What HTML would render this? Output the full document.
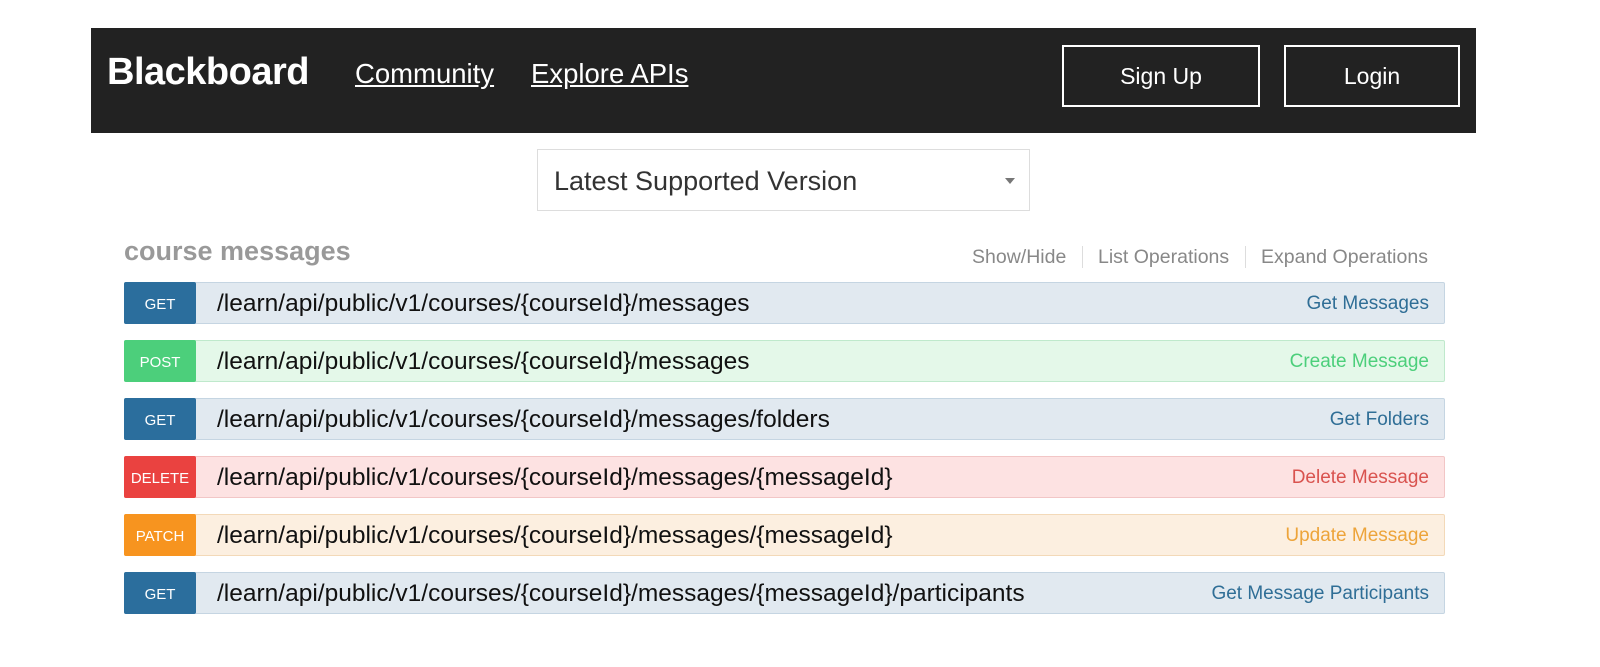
<!DOCTYPE html>
<html><head><meta charset="utf-8"><style>
body{margin:0;width:1600px;height:667px;background:#fff;font-family:"Liberation Sans",sans-serif;position:relative;overflow:hidden}
.hdr{position:absolute;left:91px;top:28px;width:1385px;height:105px;background:#222}
.logo{position:absolute;left:16px;top:23px;color:#fff;font-size:38px;font-weight:bold;letter-spacing:-0.5px}
.nav{position:absolute;top:30px;color:#fff;font-size:27.5px;text-decoration:underline}
.btn{position:absolute;top:17px;height:58px;border:2px solid #fff;color:#fff;font-size:23px;text-align:center;line-height:58px;box-sizing:content-box}
.sel{position:absolute;left:537px;top:149px;border:1px solid #ddd;font-size:27px;color:#333;line-height:62px;box-sizing:border-box;width:493px;height:62px;padding-left:16px}
.sel:after{content:"";position:absolute;right:14px;top:28px;border:5px solid transparent;border-top:6px solid #777}
h2{position:absolute;left:124px;top:236px;margin:0;font-size:27px;color:#999;font-weight:bold}
.ops{position:absolute;top:246px;font-size:19.5px;color:#888}
.sep{position:absolute;top:246px;width:1px;height:22px;background:#ddd}
.row{position:absolute;left:124px;width:1321px;height:42px;box-sizing:border-box;border:1px solid;border-radius:2px}
.b{position:absolute;left:-1px;top:-1px;width:72px;height:42px;border-radius:2px;color:#fff;font-size:15px;text-align:center;line-height:46px}
.p{position:absolute;left:92px;top:7px;font-size:24.5px;color:#111}
.r{position:absolute;right:15px;top:10px;font-size:19px}
.g{background:#e1e9f0;border-color:#c5d5e2}.g .b{background:#2b6e9d}.g .r{color:#2f6e96}
.po{background:#e4f8e9;border-color:#bfe9cc}.po .b{background:#4ccf7b}.po .r{color:#4ccf7b}
.d{background:#fde2e2;border-color:#f2c6c6}.d .b{background:#ea4240}.d .r{color:#d9534f}
.pa{background:#fcefe0;border-color:#f3d9b8}.pa .b{background:#f7941f}.pa .r{color:#eda43a}
</style></head><body>
<div class="hdr">
<div class="logo">Blackboard</div>
<div class="nav" style="left:264px">Community</div>
<div class="nav" style="left:440px">Explore APIs</div>
<div class="btn" style="left:971px;width:194px">Sign Up</div>
<div class="btn" style="left:1193px;width:172px">Login</div>
</div>
<div class="sel">Latest Supported Version</div>
<h2>course messages</h2>
<div class="ops" style="left:972px">Show/Hide</div>
<div class="sep" style="left:1082px"></div>
<div class="ops" style="left:1098px">List Operations</div>
<div class="sep" style="left:1245px"></div>
<div class="ops" style="left:1261px">Expand Operations</div>

<div class="row g" style="top:282px"><div class="b">GET</div><div class="p">/learn/api/public/v1/courses/{courseId}/messages</div><div class="r">Get Messages</div></div>
<div class="row po" style="top:340px"><div class="b">POST</div><div class="p">/learn/api/public/v1/courses/{courseId}/messages</div><div class="r">Create Message</div></div>
<div class="row g" style="top:398px"><div class="b">GET</div><div class="p">/learn/api/public/v1/courses/{courseId}/messages/folders</div><div class="r">Get Folders</div></div>
<div class="row d" style="top:456px"><div class="b">DELETE</div><div class="p">/learn/api/public/v1/courses/{courseId}/messages/{messageId}</div><div class="r">Delete Message</div></div>
<div class="row pa" style="top:514px"><div class="b">PATCH</div><div class="p">/learn/api/public/v1/courses/{courseId}/messages/{messageId}</div><div class="r">Update Message</div></div>
<div class="row g" style="top:572px"><div class="b">GET</div><div class="p">/learn/api/public/v1/courses/{courseId}/messages/{messageId}/participants</div><div class="r">Get Message Participants</div></div>
</body></html>
